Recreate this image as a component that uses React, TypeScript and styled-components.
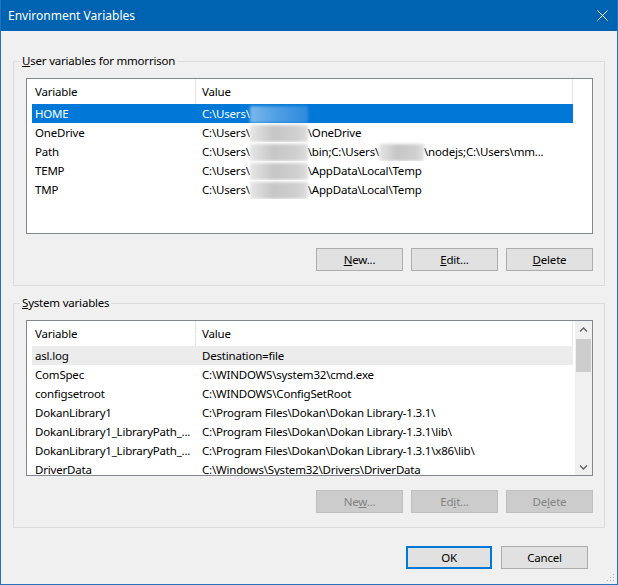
import React from 'react';
import styled, { createGlobalStyle } from 'styled-components';

const GlobalStyle = createGlobalStyle`
  * { box-sizing: border-box; }
  html, body { margin: 0; padding: 0; background: #f0f0f0; }
  body {
    font-family: 'Segoe UI', 'Noto Sans', 'Liberation Sans', sans-serif;
    font-size: 11.5px;
    letter-spacing: -0.2px;
    color: #000;
  }
`;

const Window = styled.div`
  position: relative;
  width: 618px;
  height: 585px;
  display: flex;
  flex-direction: column;
  background: #f0f0f0;
  border: 1px solid #1f74bf;
  border-top: none;
`;

const TitleBar = styled.div`
  height: 31px;
  flex-shrink: 0;
  display: flex;
  align-items: center;
  justify-content: space-between;
  padding-left: 7px;
  background: #0063b1;
  color: #fff;
`;

const Title = styled.span`
  font-size: 12px;
  letter-spacing: 0;
`;

const CloseButton = styled.div`
  width: 30px;
  height: 31px;
  display: flex;
  align-items: center;
  justify-content: center;
`;

const Body = styled.div`
  flex: 1;
  display: flex;
  flex-direction: column;
  padding: 22px 12px 15px 12px;
`;

const Group = styled.fieldset<{ $spaced?: boolean }>`
  margin: ${(p) => (p.$spaced ? '9px 0 0 0' : '0')};
  padding: 9px 11px 14px 12px;
  border: 1px solid #dcdcdc;
  min-width: 0;
`;

const Legend = styled.legend`
  padding: 0 2px;
  margin-left: -6px;
  line-height: 16px;
  font-size: inherit;
`;

const ListBox = styled.div`
  height: 156px;
  display: flex;
  border: 1px solid #828790;
  background: #fff;
  overflow: hidden;
`;

const ListContent = styled.div`
  flex: 1;
  padding-left: 5px;
  overflow: hidden;
`;

const Header = styled.div`
  display: grid;
  grid-template-columns: 164px 377px;
  width: 541px;
  height: 25px;
`;

const HeaderCell = styled.div<{ $first?: boolean }>`
  line-height: 25px;
  padding-left: ${(p) => (p.$first ? '3px' : '6px')};
  border-right: 1px solid #e5e5e5;
  white-space: nowrap;
`;

type RowState = 'none' | 'selected' | 'inactive';

const Row = styled.div<{ $state: RowState }>`
  display: grid;
  grid-template-columns: 164px 377px;
  width: 541px;
  height: 19px;
  line-height: 19px;
  background: ${(p) =>
    p.$state === 'selected' ? '#0078d7' : p.$state === 'inactive' ? '#ececec' : 'transparent'};
  color: ${(p) => (p.$state === 'selected' ? '#fff' : '#000')};
`;

const Cell = styled.div<{ $first?: boolean }>`
  padding-left: ${(p) => (p.$first ? '3px' : '6px')};
  white-space: nowrap;
  overflow: hidden;
`;

const Smudge = styled.span<{ $w: number; $onBlue?: boolean }>`
  display: inline-block;
  width: ${(p) => p.$w}px;
  height: 17px;
  vertical-align: middle;
  background: ${(p) =>
    p.$onBlue
      ? 'linear-gradient(90deg, #7db8ec, #4f9fe4 45%, #2f8ade)'
      : 'linear-gradient(90deg, #e6e6e6, #c6c6c6 40%, #cfcfcf 80%, #dedede)'};
  filter: blur(1.5px);
`;

const ScrollBar = styled.div`
  width: 17px;
  flex-shrink: 0;
  display: flex;
  flex-direction: column;
  background: #f0f0f0;
`;

const ScrollArrow = styled.div`
  height: 17px;
  display: flex;
  align-items: center;
  justify-content: center;
`;

const ScrollTrack = styled.div`
  flex: 1;
  padding: 1px 1px 0 1px;
`;

const Thumb = styled.div`
  height: 33px;
  background: #cdcdcd;
`;

const ButtonRow = styled.div`
  display: flex;
  justify-content: flex-end;
  gap: 8px;
  margin-top: 14px;
`;

const Button = styled.button<{ $primary?: boolean; $width?: number }>`
  width: ${(p) => p.$width ?? 87}px;
  height: 23px;
  padding: 0;
  font-family: inherit;
  font-size: inherit;
  letter-spacing: inherit;
  color: #000;
  background: #e1e1e1;
  border: 1px solid ${(p) => (p.$primary ? '#0078d7' : '#adadad')};
  box-shadow: ${(p) => (p.$primary ? 'inset 0 0 0 1px #0078d7' : 'none')};
  border-radius: 0;

  &:disabled {
    background: #cccccc;
    border-color: #bfbfbf;
    color: #838383;
  }
`;

const Footer = styled.div`
  display: flex;
  justify-content: flex-end;
  gap: 9px;
  margin-top: 18px;
  padding-right: 17px;
`;

const Grip = styled.svg`
  position: absolute;
  right: 2px;
  bottom: 2px;
`;

type Part = string | number;

interface Variable {
  name: string;
  value: Part[];
  state?: RowState;
}

const userVars: Variable[] = [
  { name: 'HOME', value: ['C:\\Users\\', 58], state: 'selected' },
  { name: 'OneDrive', value: ['C:\\Users\\', 58, '\\OneDrive'] },
  {
    name: 'Path',
    value: ['C:\\Users\\', 58, '\\bin;C:\\Users\\', 45, '\\nodejs;C:\\Users\\mm...']
  },
  { name: 'TEMP', value: ['C:\\Users\\', 58, '\\AppData\\Local\\Temp'] },
  { name: 'TMP', value: ['C:\\Users\\', 58, '\\AppData\\Local\\Temp'] }
];

const systemVars: Variable[] = [
  { name: 'asl.log', value: ['Destination=file'], state: 'inactive' },
  { name: 'ComSpec', value: ['C:\\WINDOWS\\system32\\cmd.exe'] },
  { name: 'configsetroot', value: ['C:\\WINDOWS\\ConfigSetRoot'] },
  { name: 'DokanLibrary1', value: ['C:\\Program Files\\Dokan\\Dokan Library-1.3.1\\'] },
  {
    name: 'DokanLibrary1_LibraryPath_...',
    value: ['C:\\Program Files\\Dokan\\Dokan Library-1.3.1\\lib\\']
  },
  {
    name: 'DokanLibrary1_LibraryPath_...',
    value: ['C:\\Program Files\\Dokan\\Dokan Library-1.3.1\\x86\\lib\\']
  },
  { name: 'DriverData', value: ['C:\\Windows\\System32\\Drivers\\DriverData'] }
];

const Chevron = ({ down }: { down?: boolean }) => (
  <svg width="9" height="6" viewBox="0 0 9 6">
    <path
      d={down ? 'M1 1.5 L4.5 5 L8 1.5' : 'M1 4.5 L4.5 1 L8 4.5'}
      fill="none"
      stroke="#606060"
      strokeWidth="1.3"
    />
  </svg>
);

const VariableList = ({ rows, scroll }: { rows: Variable[]; scroll?: boolean }) => (
  <ListBox>
    <ListContent>
      <Header>
        <HeaderCell $first>Variable</HeaderCell>
        <HeaderCell>Value</HeaderCell>
      </Header>
      {rows.map((row, i) => {
        const state = row.state ?? 'none';
        return (
          <Row key={i} $state={state}>
            <Cell $first>{row.name}</Cell>
            <Cell>
              {row.value.map((part, j) =>
                typeof part === 'number' ? (
                  <Smudge key={j} $w={part} $onBlue={state === 'selected'} />
                ) : (
                  <span key={j}>{part}</span>
                )
              )}
            </Cell>
          </Row>
        );
      })}
    </ListContent>
    {scroll && (
      <ScrollBar>
        <ScrollArrow>
          <Chevron />
        </ScrollArrow>
        <ScrollTrack>
          <Thumb />
        </ScrollTrack>
        <ScrollArrow>
          <Chevron down />
        </ScrollArrow>
      </ScrollBar>
    )}
  </ListBox>
);

const App = () => (
  <>
    <GlobalStyle />
    <Window>
      <TitleBar>
        <Title>Environment Variables</Title>
        <CloseButton>
          <svg width="11" height="11" viewBox="0 0 11 11">
            <path d="M0.5 0.5 L10.5 10.5 M10.5 0.5 L0.5 10.5" stroke="#fff" strokeWidth="1" />
          </svg>
        </CloseButton>
      </TitleBar>
      <Body>
        <Group>
          <Legend>
            <u>U</u>ser variables for mmorrison
          </Legend>
          <VariableList rows={userVars} />
          <ButtonRow>
            <Button>
              <u>N</u>ew...
            </Button>
            <Button>
              <u>E</u>dit...
            </Button>
            <Button>
              <u>D</u>elete
            </Button>
          </ButtonRow>
        </Group>
        <Group $spaced>
          <Legend>
            <u>S</u>ystem variables
          </Legend>
          <VariableList rows={systemVars} scroll />
          <ButtonRow>
            <Button disabled>
              Ne<u>w</u>...
            </Button>
            <Button disabled>
              Ed<u>i</u>t...
            </Button>
            <Button disabled>
              De<u>l</u>ete
            </Button>
          </ButtonRow>
        </Group>
        <Footer>
          <Button $primary $width={86}>
            OK
          </Button>
          <Button>Cancel</Button>
        </Footer>
      </Body>
      <Grip width="10" height="10" viewBox="0 0 10 10">
        <rect x="8" y="2" width="1" height="1" fill="#b0b0b0" />
        <rect x="5" y="5" width="1" height="1" fill="#b0b0b0" />
        <rect x="8" y="5" width="1" height="1" fill="#b0b0b0" />
        <rect x="2" y="8" width="1" height="1" fill="#b0b0b0" />
        <rect x="5" y="8" width="1" height="1" fill="#b0b0b0" />
        <rect x="8" y="8" width="1" height="1" fill="#b0b0b0" />
      </Grip>
    </Window>
  </>
);

export default App;
